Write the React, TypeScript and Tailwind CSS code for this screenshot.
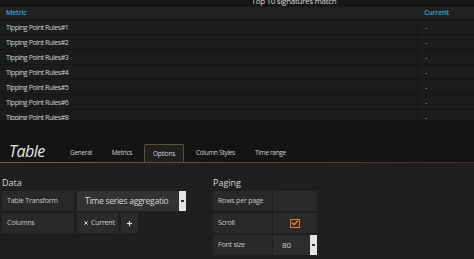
import { Check, Plus, X } from 'lucide-react'

const rows = ['Tipping Point Rules#1', 'Tipping Point Rules#2', 'Tipping Point Rules#3', 'Tipping Point Rules#4', 'Tipping Point Rules#5', 'Tipping Point Rules#6', 'Tipping Point Rules#8']

const tabs = ['General', 'Metrics', 'Options', 'Column Styles', 'Time range']

function Label({ text, w }: { text: string; w: string }) {
  return (
    <div className={`${w} h-full flex items-center pl-[5px] bg-[#292929] text-[7px] tracking-[-0.2px] text-[#c8c8c8]`}>
      {text}
    </div>
  )
}

function Spinner() {
  return (
    <div className="w-[7px] h-full bg-[#e4e4e4] flex items-center justify-center">
      <div className="w-[3px] h-[1.5px] bg-[#333]" />
    </div>
  )
}

export default function App() {
  return (
    <div className="w-[474px] h-[259px] overflow-hidden bg-[#1f1f1f] font-['Open_Sans',sans-serif]">
      <div className="h-[120px] overflow-hidden bg-[#1c1c1c]">
        <div className="h-[7px] overflow-hidden bg-[#161616] flex justify-center">
          <span className="text-[8px] leading-[8px] -mt-[3px] ml-[114px] tracking-[-0.3px] text-[#d8d8d8]">Top 10 signatures match</span>
        </div>
        <div className="flex h-[12px] bg-[#212121] items-center text-[7px] font-semibold tracking-[-0.2px] text-[#33a6d8]">
          <div className="flex-1 pl-[6px]">Metric</div>
          <div className="w-[57px] pl-[7px]">Current</div>
        </div>
        {rows.map((r) => (
          <div key={r} className="flex h-[15px] border-t border-[#151515] text-[7px] tracking-[-0.4px] text-[#d0d0d0]">
            <div className="flex-1 pl-[6px] pt-[2px] flex items-center">{r}</div>
            <div className="w-[57px] pl-[7px] pt-[2px] flex items-center border-l border-[#151515] text-[#aaa]">-</div>
          </div>
        ))}
      </div>

      <div className="h-[42px] bg-[#141414] flex items-end">
        <div className="mb-[3px] pl-[9px] w-[60px] text-[16px] italic tracking-[-0.5px] text-[#e6e6e6] leading-none">Table</div>
        <div className="flex items-end h-[18px] text-[6.5px] tracking-[-0.3px] text-[#cfcfcf]">
          {tabs.map((t) => (
            <div
              key={t}
              className={
                t === 'Options'
                  ? 'h-[18px] px-[8px] mx-[2px] flex items-center border border-b-0 border-[#5b5036] bg-[#1f1f1f] rounded-t-[2px]'
                  : 'h-[18px] px-[10px] flex items-center'
              }
            >
              {t}
            </div>
          ))}
        </div>
      </div>
      <div className="h-px bg-gradient-to-r from-[#7d6722] via-[#5e4a22] to-[#4a2a32]" />

      <div className="flex pt-[14px]">
        <div className="w-[213px] pl-[2px]">
          <div className="text-[9px] leading-[12px] text-[#d8d8d8] mb-[2px]">Data</div>
          <div className="flex h-[20px] gap-[3px]">
            <Label text="Table Transform" w="w-[72px]" />
            <div className="w-[109px] h-full flex bg-[#323232]">
              <div className="flex-1 flex items-center pl-[8px] text-[8.5px] tracking-[-0.25px] text-[#d8d8d8] overflow-hidden whitespace-nowrap">
                Time series aggregatio
              </div>
              <Spinner />
            </div>
          </div>
          <div className="flex h-[20px] gap-[3px] mt-[2px]">
            <Label text="Columns" w="w-[72px]" />
            <div className="w-[41px] h-full flex items-center gap-[2px] pl-[6px] bg-[#2b2b2b] text-[7px] tracking-[-0.2px] text-[#d0d0d0]">
              <X size={6} strokeWidth={4} className="text-[#cfcfcf]" />
              Current
            </div>
            <div className="w-[17px] h-full flex items-center justify-center bg-[#2b2b2b]">
              <Plus size={7} strokeWidth={4} className="text-[#e0e0e0]" />
            </div>
          </div>
        </div>

        <div className="w-[104px]">
          <div className="text-[9px] leading-[12px] text-[#d8d8d8] mb-[2px]">Paging</div>
          <div className="flex flex-col gap-[2px]">
            <div className="flex h-[20px] gap-[1px]">
              <Label text="Rows per page" w="w-[59px]" />
              <div className="w-[44px] h-full flex items-center pl-[17px] bg-[#2a2a2a] text-[5px] text-[#3c3c3c]">11</div>
            </div>
            <div className="flex h-[20px] gap-[1px]">
              <Label text="Scroll" w="w-[59px]" />
              <div className="w-[44px] h-full flex items-center justify-center bg-[#2a2a2a]">
                <div className="w-[10px] h-[9px] border border-[#e07b1c] bg-[#3b2a1a] flex items-center justify-center">
                  <Check size={8} strokeWidth={4} className="text-[#f08a24]" />
                </div>
              </div>
            </div>
            <div className="flex h-[20px] gap-[1px]">
              <Label text="Font size" w="w-[59px]" />
              <div className="w-[44px] h-full flex bg-[#2d2d2d]">
                <div className="flex-1 flex items-center pl-[9px] text-[8px] text-[#d0d0d0]">80</div>
                <Spinner />
              </div>
            </div>
          </div>
        </div>
      </div>
    </div>
  )
}
